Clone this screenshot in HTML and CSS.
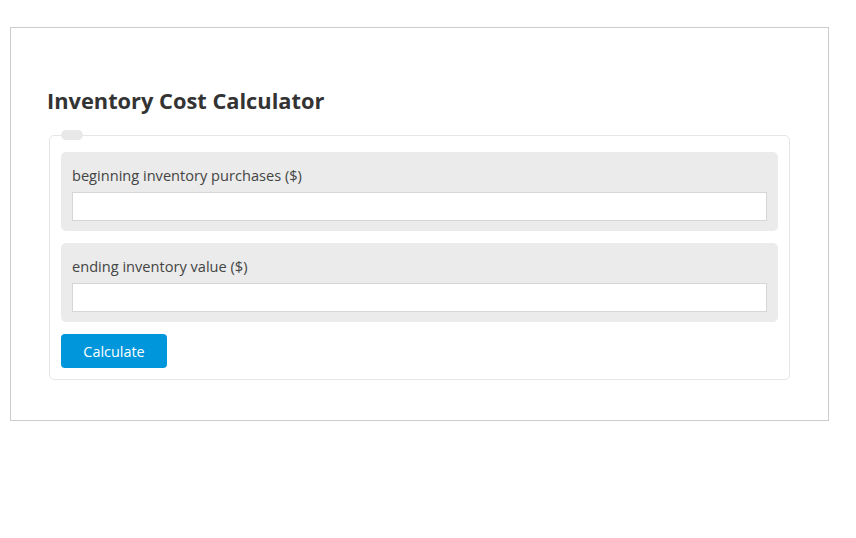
FILE: index.html
```html
<html>

<head>
  <link rel="stylesheet" href="styles.css">
</head>

<body>
  <div class="calculator">
    <h2 class="title">Inventory Cost Calculator</h2>
    <fieldset class="form">
      <legend><span class="pill"></span></legend>
      <div class="field">
        <label for="begin">beginning inventory purchases ($)</label>
        <input type="text" id="begin">
      </div>
      <div class="field">
        <label for="end">ending inventory value ($)</label>
        <input type="text" id="end">
      </div>
      <button class="calc">Calculate</button>
    </fieldset>
  </div>
</body>

</html>
```

FILE: styles.css
```css
* {
  box-sizing: border-box;
}

body {
  margin: 0;
  font-family: "Open Sans", "Noto Sans", sans-serif;
  color: #333333;
  background: #ffffff;
}

.calculator {
  margin: 27px 0 0 10px;
  width: 819px;
  border: 1px solid #cccccc;
  padding: 58px 38px 40px 38px;
}

.title {
  margin: 0 0 14px -2px;
  font-size: 21.8px;
  line-height: 30px;
  font-weight: 700;
  color: #333333;
}

.form {
  margin: 0;
  border: 1px solid #e6e6e6;
  border-radius: 5px;
  padding: 12px 11px 11px 11px;
  display: flex;
  flex-direction: column;
  gap: 12px;
}

.form legend {
  padding: 0;
  line-height: 0;
}

.pill {
  display: block;
  width: 22px;
  height: 10px;
  border-radius: 5px;
  background: #e8e8e8;
}

.field {
  background: #eaebea;
  border-radius: 5px;
  padding: 13px 11px 10px 11px;
  display: flex;
  flex-direction: column;
  gap: 7px;
}

.field label {
  font-size: 14.6px;
  line-height: 20px;
  color: #444444;
}

.field input {
  height: 29px;
  margin: 0;
  border: 1px solid #d6d6d6;
  background: #ffffff;
  padding: 0 6px;
  font-size: 14px;
  outline: none;
}

.calc {
  align-self: flex-start;
  width: 106px;
  height: 34px;
  border: none;
  border-radius: 4px;
  background: #0096db;
  color: #ffffff;
  font-family: "Open Sans", "Noto Sans", sans-serif;
  font-size: 14.4px;
}
```
